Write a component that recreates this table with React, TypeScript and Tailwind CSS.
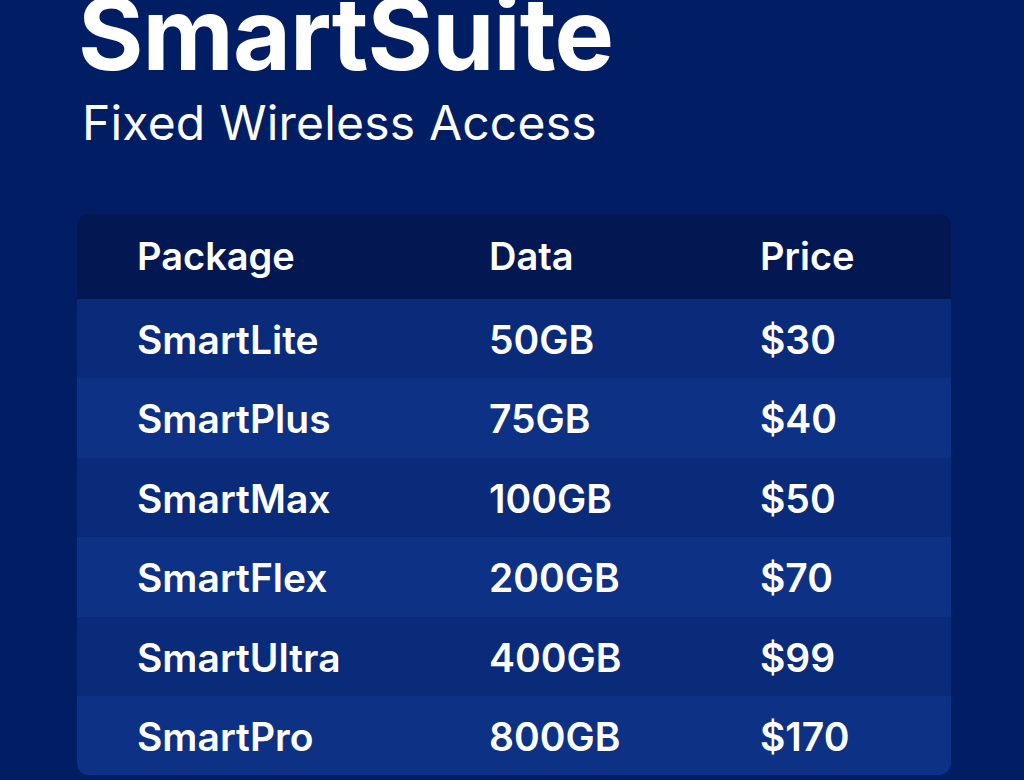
import React from 'react';

interface Plan {
  name: string;
  data: string;
  price: string;
}

const plans: Plan[] = [
  { name: 'SmartLite', data: '50GB', price: '$30' },
  { name: 'SmartPlus', data: '75GB', price: '$40' },
  { name: 'SmartMax', data: '100GB', price: '$50' },
  { name: 'SmartFlex', data: '200GB', price: '$70' },
  { name: 'SmartUltra', data: '400GB', price: '$99' },
  { name: 'SmartPro', data: '800GB', price: '$170' },
];

export default function App() {
  return (
    <div className="w-[1024px] h-[780px] overflow-hidden bg-[#011d63] text-white font-['Inter',sans-serif]">
      <div className="pl-[78px] -mt-[16px]">
        <h1 className="text-[100px] font-bold leading-none tracking-[-0.9px]">SmartSuite</h1>
        <p className="mt-[15px] pl-[4px] text-[48px] font-normal leading-none tracking-[0.2px]">Fixed Wireless Access</p>
      </div>

      <div className="mt-[67px] ml-[77px] w-[874px] rounded-xl overflow-hidden">
        <div className="grid grid-cols-[352px_271px_1fr] pl-[60px] h-[85px] items-center bg-[#031852] text-[38px] font-semibold">
          <span>Package</span>
          <span>Data</span>
          <span>Price</span>
        </div>
        {plans.map((plan, i) => (
          <div
            key={plan.name}
            className={`grid grid-cols-[352px_271px_1fr] pl-[60px] pt-[3px] h-[79.4px] items-center text-[39px] font-semibold ${
              i % 2 === 0 ? 'bg-[#0a2a7a]' : 'bg-[#0d3285]'
            }`}
          >
            <span>{plan.name}</span>
            <span>{plan.data}</span>
            <span>{plan.price}</span>
          </div>
        ))}
      </div>
    </div>
  );
}
